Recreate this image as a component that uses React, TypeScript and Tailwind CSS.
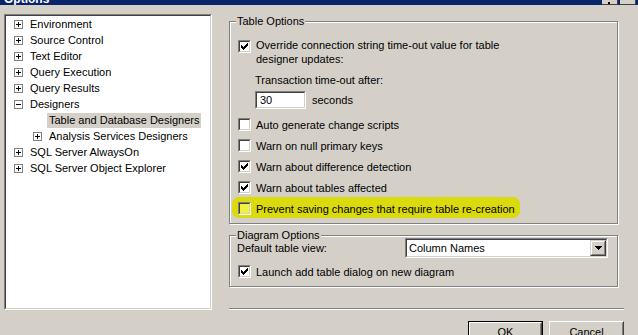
const Check = ({ checked, hl }: { checked?: boolean; hl?: boolean }) => (
  <span className="block w-[13px] h-[13px] shrink-0 border border-t-[#808080] border-l-[#808080] border-b-white border-r-white">
    <span
      className={`block w-full h-full border border-t-[#404040] border-l-[#404040] border-b-[#d4d0c8] border-r-[#d4d0c8] ${
        hl ? 'bg-[#f2f23a]' : 'bg-white'
      }`}
    >
      {checked && (
        <svg width="9" height="9" viewBox="0 0 9 9" shapeRendering="crispEdges" className="block">
          <rect x="1" y="3" width="1" height="3" fill="#000" />
          <rect x="2" y="4" width="1" height="3" fill="#000" />
          <rect x="3" y="5" width="1" height="3" fill="#000" />
          <rect x="4" y="4" width="1" height="3" fill="#000" />
          <rect x="5" y="3" width="1" height="3" fill="#000" />
          <rect x="6" y="2" width="1" height="3" fill="#000" />
          <rect x="7" y="1" width="1" height="3" fill="#000" />
        </svg>
      )}
    </span>
  </span>
);

const Expander = ({ open }: { open?: boolean }) => (
  <span className="relative block w-[9px] h-[9px] shrink-0 border border-[#808080] bg-white">
    <span className="absolute left-[1px] top-[3px] w-[5px] h-[1px] bg-black" />
    {!open && <span className="absolute left-[3px] top-[1px] w-[1px] h-[5px] bg-black" />}
  </span>
);

const tree: { label: string; level: number; kind: 'plus' | 'minus' | 'none'; selected?: boolean }[] = [
  { label: 'Environment', level: 0, kind: 'plus' },
  { label: 'Source Control', level: 0, kind: 'plus' },
  { label: 'Text Editor', level: 0, kind: 'plus' },
  { label: 'Query Execution', level: 0, kind: 'plus' },
  { label: 'Query Results', level: 0, kind: 'plus' },
  { label: 'Designers', level: 0, kind: 'minus' },
  { label: 'Table and Database Designers', level: 1, kind: 'none', selected: true },
  { label: 'Analysis Services Designers', level: 1, kind: 'plus' },
  { label: 'SQL Server AlwaysOn', level: 0, kind: 'plus' },
  { label: 'SQL Server Object Explorer', level: 0, kind: 'plus' },
];

const GroupBox = ({ title, className, children }: { title: string; className: string; children: React.ReactNode }) => (
  <div className={`relative border border-[#808080] shadow-[inset_1px_1px_0_#fff,1px_1px_0_#fff] ${className}`}>
    <span className="absolute -top-[8px] left-[6px] px-[1px] leading-[14px] bg-[#d4d0c8]">{title}</span>
    {children}
  </div>
);

const CheckRow = ({ label, checked }: { label: string; checked?: boolean }) => (
  <div className="flex items-center gap-[5px] h-[13px]">
    <Check checked={checked} />
    <span className="leading-[14px] whitespace-nowrap">{label}</span>
  </div>
);

const Button = ({ label, isDefault }: { label: string; isDefault?: boolean }) => (
  <div className={`w-[75px] h-[23px] ${isDefault ? 'border border-black' : ''}`}>
    <div className="w-full h-full border border-t-white border-l-white border-b-[#404040] border-r-[#404040]">
      <div className="w-full h-full flex items-center justify-center border border-t-[#d4d0c8] border-l-[#d4d0c8] border-b-[#808080] border-r-[#808080]">
        {label}
      </div>
    </div>
  </div>
);

export default function App() {
  return (
    <div className="w-[638px] h-[335px] overflow-hidden bg-[#d4d0c8] text-black text-[11px] font-['Liberation_Sans',Arial,sans-serif] flex flex-col">
      {/* title bar, mostly scrolled off the top */}
      <div className="h-[5px] shrink-0 bg-[#0a246a] overflow-hidden flex items-end justify-between">
        <span className="ml-[4px] mb-[-1px] text-white font-bold text-[12px] leading-[14px]">Options</span>
        <div className="flex gap-[2px] mr-[2px] h-full">
          <div className="relative w-[16px] h-full bg-[#d4d0c8] border-b border-r border-b-[#404040] border-r-[#404040]">
            <span className="absolute left-[6px] bottom-[0px] w-[2px] h-[2px] bg-black" />
          </div>
          <div className="w-[16px] h-full bg-[#d4d0c8] border-b border-r border-b-[#404040] border-r-[#404040]" />
        </div>
      </div>

      <div className="flex">
        {/* options tree */}
        <div className="ml-[4px] mt-[9px] w-[208px] h-[296px] shrink-0 border border-t-[#808080] border-l-[#808080] border-b-white border-r-white">
          <div className="w-full h-full bg-white border border-t-[#404040] border-l-[#404040] border-b-[#d4d0c8] border-r-[#d4d0c8]">
            {tree.map(item => (
              <div
                key={item.label}
                className={`flex items-center h-[16px] ${item.level === 0 ? 'pl-[8px]' : 'pl-[27px]'}`}
              >
                <span className="w-[16px] flex">
                  {item.kind !== 'none' && <Expander open={item.kind === 'minus'} />}
                </span>
                <span
                  className={`leading-[15px] whitespace-nowrap px-[2px] -ml-[2px] ${
                    item.selected ? 'bg-[#d4d0c8]' : ''
                  }`}
                >
                  {item.label}
                </span>
              </div>
            ))}
          </div>
        </div>

        {/* settings */}
        <div className="ml-[17px] mt-[16px] w-[395px] flex flex-col">
          <GroupBox title="Table Options" className="w-[389px] h-[203px] pl-[8px] pt-[16px]">
            <div className="flex items-start gap-[5px]">
              <div className="mt-[2px]">
                <Check checked />
              </div>
              <span className="leading-[14px]">
                Override connection string time-out value for table
                <br />
                designer updates:
              </span>
            </div>
            <div className="ml-[17px] mt-[7px] leading-[14px]">Transaction time-out after:</div>
            <div className="ml-[17px] mt-[4px] flex items-center gap-[6px]">
              <div className="w-[51px] h-[18px] border border-t-[#808080] border-l-[#808080] border-b-white border-r-white">
                <div className="w-full h-full bg-white pl-[3px] leading-[14px] border border-t-[#404040] border-l-[#404040] border-b-[#d4d0c8] border-r-[#d4d0c8]">
                  30
                </div>
              </div>
              <span>seconds</span>
            </div>
            <div className="mt-[9px] flex flex-col gap-[8px]">
              <CheckRow label="Auto generate change scripts" />
              <CheckRow label="Warn on null primary keys" />
              <CheckRow label="Warn about difference detection" checked />
              <CheckRow label="Warn about tables affected" checked />
              <div className="relative">
                <span className="absolute -left-[6px] -top-[5px] w-[288px] h-[21px] rounded-[7px] bg-[#dada0c]" />
                <div className="relative flex items-center gap-[5px] h-[13px]">
                  <Check hl />
                  <span className="leading-[14px] whitespace-nowrap">Prevent saving changes that require table re-creation</span>
                </div>
              </div>
            </div>
          </GroupBox>

          <GroupBox title="Diagram Options" className="mt-[11px] w-[389px] h-[52px] pl-[7px] pr-[9px] pt-[2px]">
            <div className="flex items-center justify-between">
              <span className="leading-[14px]">Default table view:</span>
              <div className="w-[203px] h-[20px] border border-t-[#808080] border-l-[#808080] border-b-white border-r-white">
                <div className="w-full h-full bg-white flex items-center justify-between border border-t-[#404040] border-l-[#404040] border-b-[#d4d0c8] border-r-[#d4d0c8]">
                  <span className="pl-[2px] leading-[14px]">Column Names</span>
                  <div className="w-[16px] h-[16px] bg-[#d4d0c8] border border-t-[#d4d0c8] border-l-[#d4d0c8] border-b-[#404040] border-r-[#404040]">
                    <div className="w-full h-full flex items-center justify-center border border-t-white border-l-white border-b-[#808080] border-r-[#808080]">
                      <svg width="7" height="4" viewBox="0 0 7 4" shapeRendering="crispEdges">
                        <path d="M0 0h7v1h-1v1h-1v1h-1v1h-1v-1h-1v-1h-1v-1h-1z" fill="#000" />
                      </svg>
                    </div>
                  </div>
                </div>
              </div>
            </div>
            <div className="ml-[1px] mt-[7px]">
              <CheckRow label="Launch add table dialog on new diagram" checked />
            </div>
          </GroupBox>

          <div className="mt-[21px] w-[395px] h-[2px] border-t border-t-[#808080] border-b border-b-white" />

          <div className="mt-[11px] w-[395px] flex justify-end gap-[6px]">
            <Button label="OK" isDefault />
            <Button label="Cancel" />
          </div>
        </div>
      </div>
    </div>
  );
}
